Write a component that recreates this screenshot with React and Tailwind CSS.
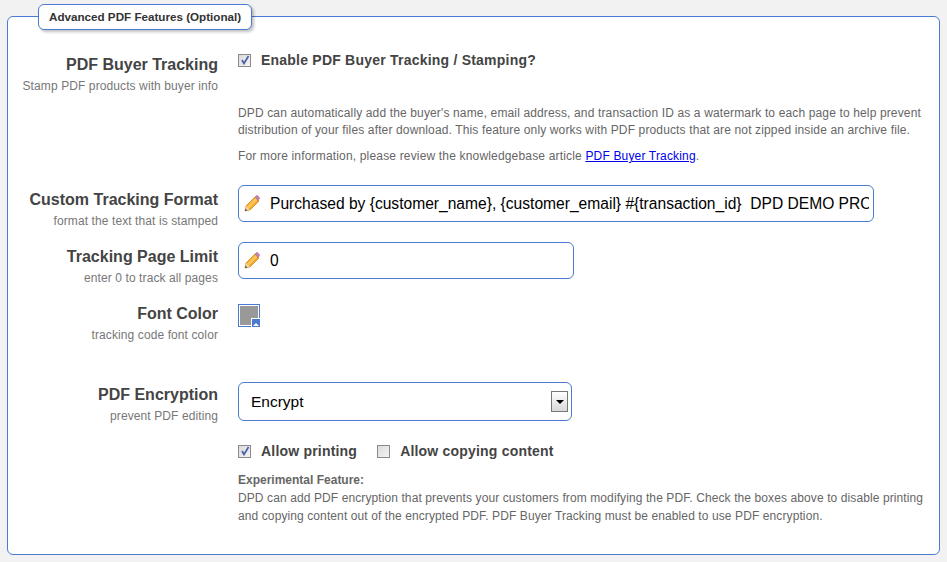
function Pencil() {
  return (
    <svg width="16" height="17" viewBox="0 0 16 17" className="shrink-0">
      <path d="M1 16 L2 11 L11 2 L15 6 L6 15 Z" fill="#f5a623" stroke="#c9801a" strokeWidth="0.7" />
      <path d="M3 11.5 L11.5 3 L13.5 5 L5 13.5 Z" fill="#fbc65a" />
      <path d="M11 2 L12.5 0.6 Q13.2 0.2 13.9 0.8 L15.4 2.4 Q15.9 3.2 15.4 3.9 L14 5.4 Z" fill="#c583b0" stroke="#9c6a90" strokeWidth="0.5" />
      <path d="M1 16 L2 11 L6 15 Z" fill="#f1d9ae" />
      <path d="M1 16 L1.5 13.5 L3.5 15.5 Z" fill="#55504a" />
    </svg>
  )
}

function Check({ checked }) {
  return (
    <span className="w-[13px] h-[13px] border border-[#8a8a8a] bg-gradient-to-br from-[#dcdcdc] to-[#f4f4f4] flex items-center justify-center shrink-0">
      {checked && (
        <svg width="10" height="10" viewBox="0 0 10 10">
          <path d="M2 5 L4 8.5 L8.5 1" fill="none" stroke="#4a5fa8" strokeWidth="1.7" />
        </svg>
      )}
    </span>
  )
}

function Label({ title, sub, className = '' }) {
  return (
    <div className={'w-[210px] shrink-0 text-right ' + className}>
      <p className="text-base font-bold text-[#444] leading-5">{title}</p>
      <p className="text-xs text-[#777] tracking-[0.1px] leading-4 mt-[3px]">{sub}</p>
    </div>
  )
}

function TextBox({ value, width }) {
  return (
    <div className={width + ' h-[37px] rounded-md border border-[#4a7bd0] bg-white flex items-center pl-[5px] pr-1 gap-[10px] overflow-hidden'}>
      <Pencil />
      <span className="text-[15.6px] text-black whitespace-pre overflow-hidden">{value}</span>
    </div>
  )
}

export default function App() {
  return (
    <div className="w-[947px] h-[562px] bg-[#f2f2f2] px-[7px] pt-4 relative font-['Liberation_Sans',Arial,sans-serif]">
      <div className="absolute left-[38px] top-1 h-[26px] px-[10px] bg-white border border-[#4a7bd0] rounded-md shadow-[2px_2px_3px_rgba(0,0,0,0.25)] flex items-center z-10">
        <span className="text-[11.65px] font-bold text-[#333]">Advanced PDF Features (Optional)</span>
      </div>

      <div className="h-[539px] bg-white border border-[#4a7bd0] rounded-md pt-[37px]">
        <div className="flex gap-5">
          <Label title="PDF Buyer Tracking" sub="Stamp PDF products with buyer info" className="pt-px" />
          <div className="w-[690px]">
            <div className="flex items-center gap-[10px] -mt-1">
              <Check checked />
              <span className="text-sm font-bold text-[#444] tracking-[0.22px]">Enable PDF Buyer Tracking / Stamping?</span>
            </div>
            <p className="text-xs text-[#666] tracking-[0.14px] leading-[17px] mt-[35px]">
              DPD can automatically add the buyer's name, email address, and transaction ID as a watermark to each page to help prevent distribution of your files after download. This feature only works with PDF products that are not zipped inside an archive file.
            </p>
            <p className="text-xs text-[#666] tracking-[0.17px] leading-[17px] mt-[9px]">
              For more information, please review the knowledgebase article <a className="text-[#0000ee] underline">PDF Buyer Tracking</a>.
            </p>
          </div>
        </div>

        <div className="flex gap-5 mt-[20px]">
          <Label title="Custom Tracking Format" sub="format the text that is stamped" className="pt-[5px]" />
          <TextBox width="w-[636px]" value="Purchased by {customer_name}, {customer_email} #{transaction_id}  DPD DEMO PRODUCT" />
        </div>

        <div className="flex gap-5 mt-[13px]">
          <Label title="Tracking Page Limit" sub="enter 0 to track all pages" className="pt-[5px]" />
          <TextBox width="w-[336px]" value="0" />
        </div>

        <div className="flex gap-5 mt-[18px]">
          <Label title="Font Color" sub="tracking code font color" />
          <div className="w-[22px] h-[23px] bg-[#999] border border-[#4a7bd0] outline outline-1 -outline-offset-2 outline-white relative">
            <span className="absolute right-[-1px] bottom-[-1px] w-[9px] h-[9px] bg-[#4a7bd0] border-t border-l border-white flex items-end justify-center pb-[1px]">
              <span className="w-0 h-0 border-x-[3px] border-x-transparent border-b-[3px] border-b-white" />
            </span>
          </div>
        </div>

        <div className="flex gap-5 mt-[42px]">
          <Label title="PDF Encryption" sub="prevent PDF editing" />
          <div className="w-[690px]">
            <div className="w-[334px] h-[39px] -mt-[3px] rounded-md border border-[#4a7bd0] bg-white flex items-center justify-between pl-3 pr-[3px]">
              <span className="text-[15.5px] text-black">Encrypt</span>
              <span className="w-[17px] h-[21px] border border-[#777] bg-gradient-to-b from-white to-[#d8d8d8] flex items-center justify-center">
                <span className="w-0 h-0 border-x-[4px] border-x-transparent border-t-[4px] border-t-black" />
              </span>
            </div>
            <div className="flex items-center mt-[20px]">
              <Check checked />
              <span className="text-sm font-bold text-[#444] tracking-[0.2px] ml-[10px]">Allow printing</span>
              <span className="ml-[20px]"><Check /></span>
              <span className="text-sm font-bold text-[#444] tracking-[0.2px] ml-[10px]">Allow copying content</span>
            </div>
            <p className="text-xs font-bold text-[#666] leading-[17px] mt-[11px]">Experimental Feature:</p>
            <p className="text-xs text-[#666] tracking-[0.1px] leading-[18px]">
              DPD can add PDF encryption that prevents your customers from modifying the PDF. Check the boxes above to disable printing and copying content out of the encrypted PDF. PDF Buyer Tracking must be enabled to use PDF encryption.
            </p>
          </div>
        </div>
      </div>
    </div>
  )
}
